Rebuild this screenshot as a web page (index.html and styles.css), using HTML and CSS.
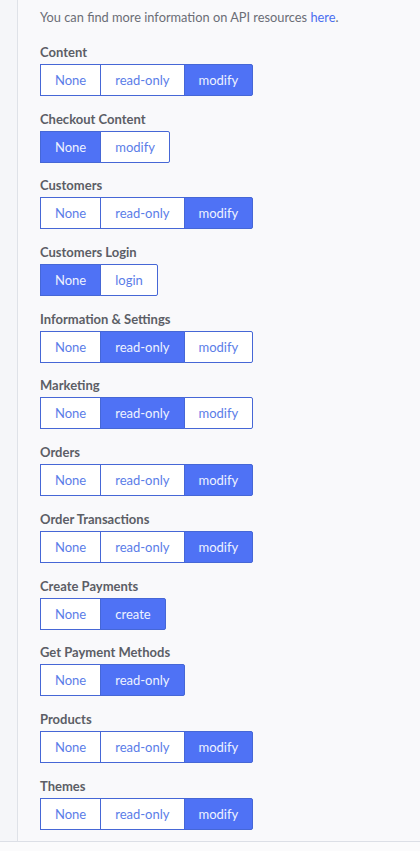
FILE: index.html
```html
<!DOCTYPE html>
<html>
<head>
<meta charset="utf-8">
<link rel="stylesheet" href="styles.css">
</head>
<body>
<div class="page">
  <div class="gutter"></div>
  <div class="panel">
    <p class="intro">You can find more information on API resources <a href="#">here</a>.</p>
    <div class="scope"><div class="label">Content</div><div class="group"><span class="btn">None</span><span class="btn">read-only</span><span class="btn on">modify</span></div></div>
    <div class="scope"><div class="label">Checkout Content</div><div class="group"><span class="btn on">None</span><span class="btn">modify</span></div></div>
    <div class="scope"><div class="label">Customers</div><div class="group"><span class="btn">None</span><span class="btn">read-only</span><span class="btn on">modify</span></div></div>
    <div class="scope"><div class="label">Customers Login</div><div class="group"><span class="btn on">None</span><span class="btn">login</span></div></div>
    <div class="scope"><div class="label">Information &amp; Settings</div><div class="group"><span class="btn">None</span><span class="btn on">read-only</span><span class="btn">modify</span></div></div>
    <div class="scope"><div class="label">Marketing</div><div class="group"><span class="btn">None</span><span class="btn on">read-only</span><span class="btn">modify</span></div></div>
    <div class="scope"><div class="label">Orders</div><div class="group"><span class="btn">None</span><span class="btn">read-only</span><span class="btn on">modify</span></div></div>
    <div class="scope"><div class="label">Order Transactions</div><div class="group"><span class="btn">None</span><span class="btn">read-only</span><span class="btn on">modify</span></div></div>
    <div class="scope"><div class="label">Create Payments</div><div class="group"><span class="btn">None</span><span class="btn on">create</span></div></div>
    <div class="scope"><div class="label">Get Payment Methods</div><div class="group"><span class="btn">None</span><span class="btn on">read-only</span></div></div>
    <div class="scope"><div class="label">Products</div><div class="group"><span class="btn">None</span><span class="btn">read-only</span><span class="btn on">modify</span></div></div>
    <div class="scope"><div class="label">Themes</div><div class="group"><span class="btn">None</span><span class="btn">read-only</span><span class="btn on">modify</span></div></div>
  </div>
</div>
<div class="footer"></div>
</body>
</html>
```
FILE: styles.css
```css
* { box-sizing: border-box; }
html, body { margin: 0; padding: 0; }
body {
  background: #fbfbfc;
  font-family: Lato, "Liberation Sans", sans-serif;
  overflow: hidden;
}
.page {
  display: flex;
  height: 842px;
  border-bottom: 1px solid #dcdfe6;
  box-shadow: inset 0 3px 3px -2px rgba(0,0,0,0.08);
}
.gutter {
  width: 18px;
  flex: none;
  background: #f5f6f9;
  border-right: 1px solid #dfe2e8;
}
.panel {
  flex: 1;
  background: #f9f9fb;
  padding: 7px 0 0 22px;
}
.intro {
  margin: 0 0 17px;
  font-size: 12.8px;
  line-height: 20px;
  color: #6b6d76;
}
.intro a { color: #4b6ef0; text-decoration: none; }
.scope { margin-bottom: 14.7px; }
.label {
  font-size: 13px;
  font-weight: 700;
  line-height: 16px;
  margin-bottom: 4px;
  color: #5c5e66;
}
.group {
  display: flex;
  width: fit-content;
  height: 32px;
}
.btn {
  display: flex;
  align-items: center;
  justify-content: center;
  padding: 0 14px;
  font-size: 13px;
  color: #5b7de8;
  background: #ffffff;
  border: 1px solid #4667d6;
  margin-left: -1px;
}
.btn:first-child { margin-left: 0; }
.btn:last-child { border-radius: 0 2px 2px 0; }
.btn.on {
  background: #4f72f5;
  color: #eef2ff;
  border-color: #4667d6;
}
.footer { height: 9px; background: #fbfbfc; }
```
